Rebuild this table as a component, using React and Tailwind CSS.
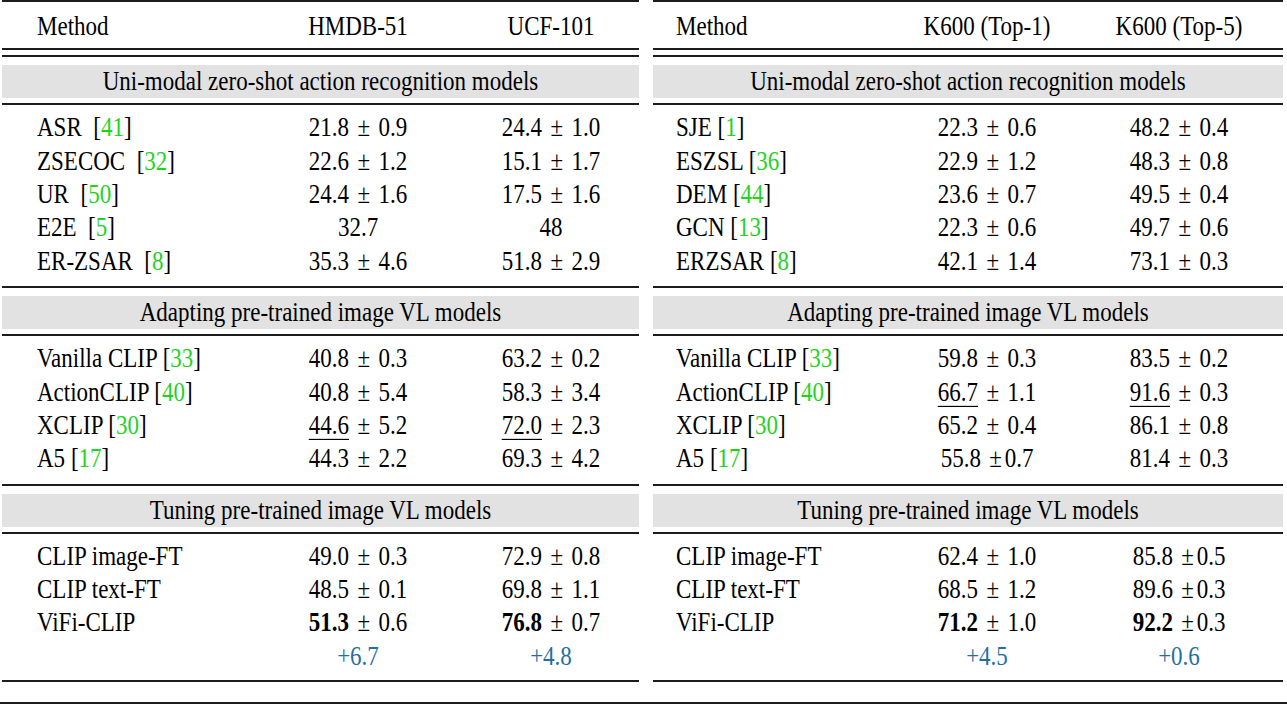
import React from 'react';

const leftTable = {
  ml: 'ml-[2px] w-[637px]',
  methodCol: 'w-[260px] pl-[35px]',
  col1: 'w-[192px]',
  col2: 'flex-1 pl-[9px]',
  header: ['HMDB-51', 'UCF-101'],
  sections: [
    {
      title: 'Uni-modal zero-shot action recognition models',
      rows: [
        ['ASR', '41', '21.8 ± 0.9', '24.4 ± 1.0', true],
        ['ZSECOC', '32', '22.6 ± 1.2', '15.1 ± 1.7', true],
        ['UR', '50', '24.4 ± 1.6', '17.5 ± 1.6', true],
        ['E2E', '5', '32.7', '48', true],
        ['ER-ZSAR', '8', '35.3 ± 4.6', '51.8 ± 2.9', true],
      ],
    },
    {
      title: 'Adapting pre-trained image VL models',
      rows: [
        ['Vanilla CLIP', '33', '40.8 ± 0.3', '63.2 ± 0.2'],
        ['ActionCLIP', '40', '40.8 ± 5.4', '58.3 ± 3.4'],
        ['XCLIP', '30', '_44.6_ ± 5.2', '_72.0_ ± 2.3'],
        ['A5', '17', '44.3 ± 2.2', '69.3 ± 4.2'],
      ],
    },
    {
      title: 'Tuning pre-trained image VL models',
      rows: [
        ['CLIP image-FT', null, '49.0 ± 0.3', '72.9 ± 0.8'],
        ['CLIP text-FT', null, '48.5 ± 0.1', '69.8 ± 1.1'],
        ['ViFi-CLIP', null, '*51.3* ± 0.6', '*76.8* ± 0.7'],
        ['', null, '+6.7', '+4.8'],
      ],
    },
  ],
};

const rightTable = {
  ml: 'ml-[14px] w-[630px]',
  methodCol: 'w-[238px] pl-[23px]',
  col1: 'w-[192px]',
  col2: 'flex-1 pr-[8px]',
  header: ['K600 (Top-1)', 'K600 (Top-5)'],
  sections: [
    {
      title: 'Uni-modal zero-shot action recognition models',
      rows: [
        ['SJE', '1', '22.3 ± 0.6', '48.2 ± 0.4'],
        ['ESZSL', '36', '22.9 ± 1.2', '48.3 ± 0.8'],
        ['DEM', '44', '23.6 ± 0.7', '49.5 ± 0.4'],
        ['GCN', '13', '22.3 ± 0.6', '49.7 ± 0.6'],
        ['ERZSAR', '8', '42.1 ± 1.4', '73.1 ± 0.3'],
      ],
    },
    {
      title: 'Adapting pre-trained image VL models',
      rows: [
        ['Vanilla CLIP', '33', '59.8 ± 0.3', '83.5 ± 0.2'],
        ['ActionCLIP', '40', '_66.7_ ± 1.1', '_91.6_ ± 0.3'],
        ['XCLIP', '30', '65.2 ± 0.4', '86.1 ± 0.8'],
        ['A5', '17', '55.8 ±0.7', '81.4 ± 0.3'],
      ],
    },
    {
      title: 'Tuning pre-trained image VL models',
      rows: [
        ['CLIP image-FT', null, '62.4 ± 1.0', '85.8 ±0.5'],
        ['CLIP text-FT', null, '68.5 ± 1.2', '89.6 ±0.3'],
        ['ViFi-CLIP', null, '*71.2* ± 1.0', '*92.2* ±0.3'],
        ['', null, '+4.5', '+0.6'],
      ],
    },
  ],
};

// the source image is squeezed sideways, so glyphs are drawn a bit taller than wide
const tall = 'inline-block scale-y-[1.16]';

const Rule = () => <div className="h-[2px] bg-[#1c1c1c]" />;

// splits "a ± b" so the ± gets the wider math glyph box
function withPm(str) {
  const i = str.indexOf('±');
  if (i < 0) return str;
  return (
    <>
      {str.slice(0, i)}
      <span className="inline-block w-[18px] text-center">±</span>
      {str.slice(i + 1)}
    </>
  );
}

// '_x_' = underlined number, '*x*' = bold number, '+x' = gain in blue
function Value({ text }) {
  if (text.startsWith('+')) return <span className={`${tall} text-[#1f6fa3]`}>{text}</span>;
  const m = text.match(/^([_*])([^_*]+)[_*](.*)$/);
  if (!m) return <span className={tall}>{withPm(text)}</span>;
  const cls = m[1] === '_' ? 'underline decoration-1 underline-offset-[4px]' : 'font-bold';
  return (
    <span className={tall}>
      <span className={cls}>{m[2]}</span>
      {withPm(m[3])}
    </span>
  );
}

function Table({ t }) {
  return (
    <div className={t.ml}>
      <Rule />
      <div className="flex h-[46px] items-center pt-[3px]">
        <div className={t.methodCol}>
          <span className={tall}>Method</span>
        </div>
        <div className={`${t.col1} text-center`}>
          <span className={tall}>{t.header[0]}</span>
        </div>
        <div className={`${t.col2} text-center`}>
          <span className={tall}>{t.header[1]}</span>
        </div>
      </div>
      <Rule />
      <div className="h-[5px]" />
      <Rule />
      {t.sections.map((s, si) => (
        <div key={s.title}>
          <div className="mt-[8px] mb-[5px] flex h-[33px] items-center justify-center bg-[#e2e2e2]">
            <span className={tall}>{s.title}</span>
          </div>
          <Rule />
          <div className={si === t.sections.length - 1 ? 'pt-[6px] pb-[7px]' : 'pt-[6px] pb-[8px]'}>
            {s.rows.map((r, ri) => (
              <div key={ri} className="flex h-[33.4px] items-center">
                <div className={`${t.methodCol} whitespace-pre`}>
                  <span className={tall}>
                    {r[0]}
                    {r[1] && (
                      <>
                        {r[4] ? '\u00a0 [' : ' ['}
                        <span className="text-[#1fd41f]">{r[1]}</span>]
                      </>
                    )}
                  </span>
                </div>
                <div className={`${t.col1} text-center whitespace-pre`}>
                  <Value text={r[2]} />
                </div>
                <div className={`${t.col2} text-center whitespace-pre`}>
                  <Value text={r[3]} />
                </div>
              </div>
            ))}
          </div>
          <Rule />
        </div>
      ))}
    </div>
  );
}

export default function App() {
  return (
    <div className="h-[706px] w-[1287px] overflow-hidden bg-white font-['Liberation_Serif',serif] text-[23px] leading-none text-black">
      <div className="flex">
        <Table t={leftTable} />
        <Table t={rightTable} />
      </div>
      <div className="mt-[20px] h-[2px] bg-[#1c1c1c]" />
    </div>
  );
}
